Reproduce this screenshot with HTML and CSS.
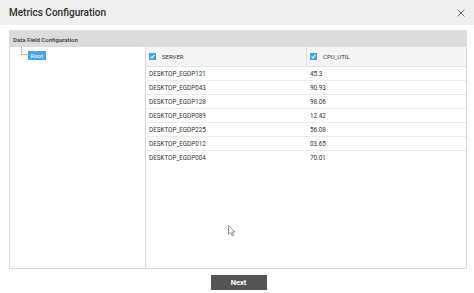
FILE: index.html
```html
<!DOCTYPE html>
<html>
<head>
<meta charset="utf-8">
<link rel="stylesheet" href="styles.css">
</head>
<body>
<div class="dialog">
  <div class="header">
    <span class="title">Metrics Configuration</span>
    <svg class="close" width="8" height="8" viewBox="0 0 8 8"><path d="M0.5 0.5L7.5 7.5M7.5 0.5L0.5 7.5" stroke="#666" stroke-width="0.9" fill="none"/></svg>
  </div>
  <div class="main">
    <div class="panel">
      <div class="section-head">Data Field Configuration</div>
      <div class="body">
        <div class="tree">
          <div class="node">
            <span class="connector"></span>
            <span class="root">Root</span>
          </div>
        </div>
        <div class="grid">
          <div class="grid-head">
            <div class="cell c1"><span class="cb"><svg width="7" height="7" viewBox="0 0 7 7"><path d="M1.6 3.7L3 5L5.4 1.9" stroke="#fff" stroke-width="1.1" fill="none"/></svg></span>SERVER</div>
            <div class="cell c2"><span class="cb"><svg width="7" height="7" viewBox="0 0 7 7"><path d="M1.6 3.7L3 5L5.4 1.9" stroke="#fff" stroke-width="1.1" fill="none"/></svg></span>CPU_UTIL</div>
          </div>
          <div class="row"><div class="cell c1">DESKTOP_EGDP121</div><div class="cell c2">45.3</div></div>
          <div class="row"><div class="cell c1">DESKTOP_EGDP043</div><div class="cell c2">90.93</div></div>
          <div class="row"><div class="cell c1">DESKTOP_EGDP128</div><div class="cell c2">98.06</div></div>
          <div class="row"><div class="cell c1">DESKTOP_EGDP089</div><div class="cell c2">12.42</div></div>
          <div class="row"><div class="cell c1">DESKTOP_EGDP225</div><div class="cell c2">56.08</div></div>
          <div class="row"><div class="cell c1">DESKTOP_EGDP012</div><div class="cell c2">03.65</div></div>
          <div class="row last"><div class="cell c1">DESKTOP_EGDP004</div><div class="cell c2">70.01</div></div>
        </div>
      </div>
    </div>
  </div>
  <div class="footer">
    <button class="next">Next</button>
  </div>
  <svg class="cursor" width="8" height="12" viewBox="0 0 8 12"><path d="M0.5 0.5L0.5 9.5L2.7 7.5L4.3 11L5.6 10.4L4.1 7L7 7Z" fill="#fff" stroke="#777" stroke-width="0.8"/></svg>
</div>
</body>
</html>
```

FILE: styles.css
```css
* { box-sizing: border-box; }
html, body { margin: 0; padding: 0; background: #fff; }
body { font-family: Roboto, "Liberation Sans", sans-serif; color: #333; }
.dialog { position: relative; width: 474px; height: 293px; overflow: hidden; }
.header {
  height: 25px;
  background: #efefef;
  display: flex;
  align-items: center;
  justify-content: space-between;
  padding: 0 9px 0 9px;
}
.title { font-size: 10px; font-weight: 500; color: #2e2e2e; }
.close { display: block; }
.main { padding: 5px 7px 0 9px; }
.panel {
  height: 239px;
  border: 1px solid #dcdcdc;
  display: flex;
  flex-direction: column;
}
.section-head {
  height: 16px;
  background: #dcdcdc;
  font-size: 6px;
  font-weight: 500;
  color: #333;
  display: flex;
  align-items: center;
  padding-left: 3px;
}
.body { flex: 1; display: flex; }
.tree { width: 136px; border-right: 1px solid #dcdcdc; }
.node { display: flex; align-items: flex-start; padding-left: 11px; }
.connector {
  width: 7px;
  height: 8px;
  border-left: 1px solid #e6a8a8;
  border-bottom: 1px solid #e6a8a8;
}
.root {
  margin-top: 4px;
  background: #4aa3e2;
  color: #fff;
  font-size: 6px;
  height: 9px;
  line-height: 9px;
  padding: 0 2.5px;
}
.grid { flex: 1; display: flex; flex-direction: column; }
.grid-head {
  height: 20px;
  background: #f5f5f5;
  border-bottom: 1px solid #e4e4e4;
  display: flex;
  font-size: 6px;
  color: #333;
}
.grid-head .cell { display: flex; align-items: center; }
.grid-head .c2 { border-left: 1px solid #dddddd; }
.cb {
  width: 7px;
  height: 7px;
  background: #3fa8e0;
  margin-right: 6px;
  display: inline-flex;
}
.cb svg { display: block; }
.cell { padding-left: 3px; }
.c1 { width: 160px; }
.c2 { flex: 1; }
.grid-head .c2 { padding-left: 3px; }
.row {
  height: 14px;
  display: flex;
  align-items: center;
  border-bottom: 1px solid #ececec;
  font-size: 6.3px;
  color: #333;
}
.row.last { border-bottom: none; }
.row .c2 { padding-left: 4px; }
.footer { display: flex; justify-content: center; padding-top: 6px; padding-left: 3px; }
.next {
  width: 56px;
  height: 15px;
  background: #555;
  border: none;
  color: #fff;
  font-family: Roboto, "Liberation Sans", sans-serif;
  font-size: 7.5px;
  font-weight: 700;
  padding: 0;
}
.cursor { position: absolute; left: 228px; top: 225px; }
```
